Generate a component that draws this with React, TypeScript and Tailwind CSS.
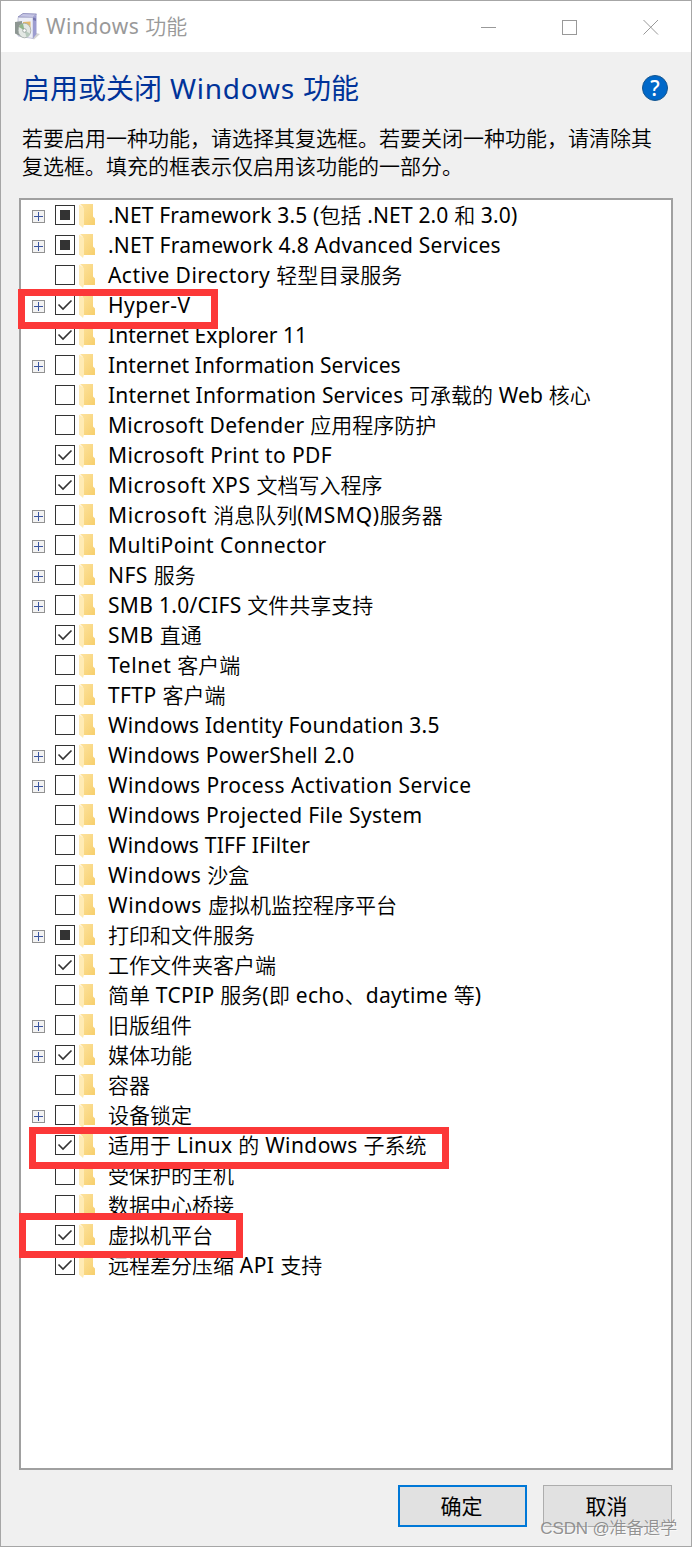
type CheckState = "off" | "on" | "partial"

interface Feature {
  name: string
  state: CheckState
  expandable?: boolean
  tracking?: string
}

const features: Feature[] = [
  { name: ".NET Framework 3.5 (包括 .NET 2.0 和 3.0)", state: "partial", expandable: true, tracking: "tracking-[0.16px]" },
  { name: ".NET Framework 4.8 Advanced Services", state: "partial", expandable: true, tracking: "tracking-[0.24px]" },
  { name: "Active Directory 轻型目录服务", state: "off", tracking: "tracking-[0.45px]" },
  { name: "Hyper-V", state: "on", expandable: true, tracking: "tracking-[0.5px]" },
  { name: "Internet Explorer 11", state: "on", tracking: "tracking-[0.05px]" },
  { name: "Internet Information Services", state: "off", expandable: true, tracking: "tracking-[0.08px]" },
  { name: "Internet Information Services 可承载的 Web 核心", state: "off", tracking: "tracking-[0.17px]" },
  { name: "Microsoft Defender 应用程序防护", state: "off", tracking: "tracking-[0.3px]" },
  { name: "Microsoft Print to PDF", state: "on", tracking: "tracking-[0.36px]" },
  { name: "Microsoft XPS 文档写入程序", state: "on", tracking: "tracking-[0.57px]" },
  { name: "Microsoft 消息队列(MSMQ)服务器", state: "off", expandable: true, tracking: "tracking-[0.66px]" },
  { name: "MultiPoint Connector", state: "off", expandable: true, tracking: "tracking-[0.43px]" },
  { name: "NFS 服务", state: "off", expandable: true, tracking: "tracking-[0.5px]" },
  { name: "SMB 1.0/CIFS 文件共享支持", state: "off", expandable: true, tracking: "tracking-[0.3px]" },
  { name: "SMB 直通", state: "on", tracking: "tracking-[0.5px]" },
  { name: "Telnet 客户端", state: "off", tracking: "tracking-[0.57px]" },
  { name: "TFTP 客户端", state: "off", tracking: "tracking-[0.4px]" },
  { name: "Windows Identity Foundation 3.5", state: "off", tracking: "tracking-[0.22px]" },
  { name: "Windows PowerShell 2.0", state: "on", expandable: true, tracking: "tracking-[0.32px]" },
  { name: "Windows Process Activation Service", state: "off", expandable: true, tracking: "tracking-[0.41px]" },
  { name: "Windows Projected File System", state: "off", tracking: "tracking-[0.35px]" },
  { name: "Windows TIFF IFilter", state: "off", tracking: "tracking-[0.2px]" },
  { name: "Windows 沙盒", state: "off", tracking: "tracking-[0.5px]" },
  { name: "Windows 虚拟机监控程序平台", state: "off", tracking: "tracking-[0.6px]" },
  { name: "打印和文件服务", state: "partial", expandable: true },
  { name: "工作文件夹客户端", state: "on" },
  { name: "简单 TCPIP 服务(即 echo、daytime 等)", state: "off", tracking: "tracking-[0.33px]" },
  { name: "旧版组件", state: "off", expandable: true },
  { name: "媒体功能", state: "on", expandable: true },
  { name: "容器", state: "off" },
  { name: "设备锁定", state: "off", expandable: true },
  { name: "适用于 Linux 的 Windows 子系统", state: "on", tracking: "tracking-[0.41px]" },
  { name: "受保护的主机", state: "off" },
  { name: "数据中心桥接", state: "off" },
  { name: "虚拟机平台", state: "on" },
  { name: "远程差分压缩 API 支持", state: "on", tracking: "tracking-[0.4px]" },
]

function PackageIcon() {
  return (
    <svg className="h-[27px] w-[26px]" viewBox="0 0 26 27">
      <path d="M17 25 L22 20 L26 21 L20 26.5 Z" fill="#b5b5b5" opacity="0.6" />
      <path d="M4 4 L9 0.5 L22.5 1 L19 4.5 Z" fill="#c5c5e4" stroke="#8383b5" strokeWidth="0.8" />
      <path d="M4 4.5 H19 V25.5 L4 23 Z" fill="#eceef8" stroke="#b3b4d0" strokeWidth="0.7" />
      <path d="M19 4.5 L22.5 1.5 V21 L19 25.5 Z" fill="#9c9cd0" />
      <path d="M19 4.5 L22 5.5 V8 L19 7 Z" fill="#7676ad" />
      <path d="M1 9 L8 8 V24 L1 20.5 Z" fill="#8d9692" />
      <path d="M9 9 L16.5 8.5 V20 L9 21 Z" fill="#e5b969" />
      <ellipse cx="10.5" cy="17.5" rx="6.3" ry="7.3" fill="#e3e8e4" stroke="#a1aaa5" strokeWidth="0.8" />
      <path d="M10.5 17.5 L5 14 Q6.5 11 9 10.6 Z" fill="#8fb58b" />
      <path d="M10.5 17.5 L16 20.5 Q15 23.5 12.5 24.2 Z" fill="#b7c9bd" />
      <circle cx="10.5" cy="17.5" r="1.8" fill="#fff" stroke="#909b96" strokeWidth="0.8" />
    </svg>
  )
}

function FolderIcon() {
  return (
    <svg className="ml-1 mt-[2px] h-6 w-4 shrink-0" viewBox="0 0 16 24">
      <defs>
        <linearGradient id="folderBack" x1="0" y1="0" x2="1" y2="1">
          <stop offset="0" stopColor="#fde3a0" />
          <stop offset="1" stopColor="#f7cf6c" />
        </linearGradient>
      </defs>
      <path d="M1 0 H14 V12.5 L16 14.5 V21 H4 V3 Z" fill="url(#folderBack)" />
      <path d="M0 0.5 L5 4 V20.5 L4 24 L0 20.5 Z" fill="#ffebb5" />
    </svg>
  )
}

function Checkbox({ state }: { state: CheckState }) {
  return (
    <div className="flex h-5 w-5 shrink-0 items-center justify-center border border-[#333] bg-white">
      {state === "partial" && <div className="h-2.5 w-2.5 bg-[#333]" />}
      {state === "on" && (
        <svg className="h-[18px] w-[18px]" viewBox="0 0 18 18" fill="none" stroke="#333" strokeWidth="1.6">
          <path d="M2.5 8.5 L7 13 L15.5 4.5" />
        </svg>
      )}
    </div>
  )
}

function Expander() {
  return (
    <svg className="h-[13px] w-[13px]" viewBox="0 0 13 13" shapeRendering="crispEdges">
      <rect x="0.5" y="0.5" width="12" height="12" fill="#f3f3f3" stroke="#919191" />
      <path d="M2 6.5 H11 M6.5 2 V11" stroke="#3b55a0" />
    </svg>
  )
}

// Only the Latin runs carry the extra tracking, Chinese runs keep their grid
function Label({ text, tracking }: { text: string; tracking?: string }) {
  return (
    <>
      {text.split(/([\u3000-\u9fff]+)/).map((part, i) => (
        <span key={i} className={i % 2 ? "font-[350]" : tracking}>
          {part}
        </span>
      ))}
    </>
  )
}

function FeatureRow({ feature }: { feature: Feature }) {
  return (
    <div className="flex h-[30px] items-center">
      <div className="ml-[11px] mt-[3px] flex w-[23px]">{feature.expandable && <Expander />}</div>
      <Checkbox state={feature.state} />
      <FolderIcon />
      <span className="ml-[13px] whitespace-pre">
        <Label text={feature.name} tracking={feature.tracking} />
      </span>
    </div>
  )
}

export default function App() {
  return (
    <div className="relative flex h-[1547px] w-[692px] flex-col border border-[#a6a6a6] bg-[#f0f0f0] font-['Noto_Sans','Noto_Sans_CJK_SC',sans-serif] text-[21px] leading-[28px] text-black">
      <header className="flex h-[51px] shrink-0 items-center bg-white">
        <div className="ml-[13px]">
          <PackageIcon />
        </div>
        <span className="-mt-0.5 ml-[6px] whitespace-pre text-[#999]">
          <Label text="Windows 功能" tracking="tracking-[0.5px]" />
        </span>
        <svg className="ml-auto mr-[32px] h-4 w-[178px]" viewBox="0 0 178 16" fill="none" stroke="#999">
          <path d="M0 8.5 H15" />
          <rect x="81.5" y="1.5" width="14" height="14" />
          <path d="M162.5 1 L177 15.5 M177 1 L162.5 15.5" />
        </svg>
      </header>

      <main className="flex grow flex-col">
        <div className="flex h-[72px] items-center justify-between pl-[21px] pr-[23px]">
          <h1 className="whitespace-pre text-[28px] text-[#003399]">
            启用或关闭<span className="tracking-[0.75px]"> Windows </span>功能
          </h1>
          <div className="flex h-[26px] w-[26px] items-center justify-center rounded-full border border-[#14558f] bg-[#0068c9] text-[21px] font-medium text-white">?</div>
        </div>
        <p className="h-[74px] pl-[21px] font-[350] leading-[28px]">
          若要启用一种功能，请选择其复选框。若要关闭一种功能，请清除其
          <br />
          复选框。填充的框表示仅启用该功能的一部分。
        </p>
        <div className="ml-[18px] h-[1272px] w-[654px] border-2 border-[#a0a0a0] bg-white">
          {features.map((feature) => (
            <FeatureRow key={feature.name} feature={feature} />
          ))}
        </div>
        <div className="mr-[19px] mt-[15px] flex justify-end gap-4">
          <button className="h-[42px] w-[129px] border-2 border-[#0078d7] bg-[#e1e1e1] pr-0.5 font-normal">确定</button>
          <button className="h-[42px] w-[129px] border border-[#adadad] bg-[#e1e1e1] pr-0.5 font-normal">取消</button>
        </div>
      </main>

      {/* Highlighted features */}
      <div className="absolute left-[17px] top-[288px] h-10 w-[200px] border-[7px] border-[#fc3838]" />
      <div className="absolute left-[28px] top-[1126px] h-[42px] w-[420px] border-[7px] border-[#fc3838]" />
      <div className="absolute left-[18px] top-[1212px] h-[45px] w-[224px] border-[7px] border-[#fc3838]" />

      <span className="absolute bottom-[3px] right-[14px] whitespace-nowrap font-['Liberation_Sans','Noto_Sans_CJK_SC',sans-serif] text-[17px] font-[350] tracking-[-0.15px] text-[#858585]/90 [text-shadow:1px_1px_0_#ffffff90]">
        CSDN @准备退学
      </span>
    </div>
  )
}
